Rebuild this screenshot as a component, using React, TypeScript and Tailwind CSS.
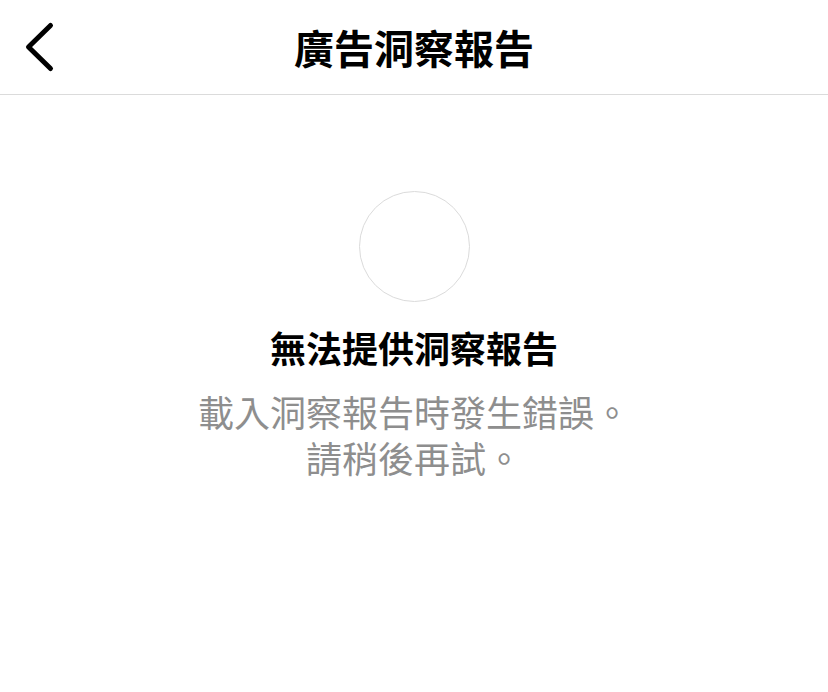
const BackIcon = () => (
    <svg width="36" height="52" viewBox="0 0 36 52" fill="none">
        <polyline
            points="30.5,4.5 8.5,26 30.5,47.5"
            stroke="#000"
            strokeWidth="5"
            strokeLinecap="round"
            strokeLinejoin="round"
        />
    </svg>
);

const App = () => {
    return (
        <div className="w-[828px] h-[692px] bg-white font-['Noto_Sans_CJK_TC',sans-serif] text-black">
            <header className="grid grid-cols-[1fr_auto_1fr] items-center h-[95px] border-b border-[#dbdbdb]">
                <div className="flex items-center pl-[20px]">
                    <BackIcon />
                </div>
                <h1 className="text-[40px] font-bold leading-[48px]">廣告洞察報告</h1>
                <div />
            </header>
            <main className="flex flex-col items-center pt-[96px]">
                <div className="w-[111px] h-[111px] rounded-full border border-[#dbdbdb]" />
                <h2 className="mt-[23px] text-[36px] font-bold leading-[44px]">
                    無法提供洞察報告
                </h2>
                <p className="mt-[19px] text-center text-[36px] leading-[46px] text-[#8e8e8e]">
                    載入洞察報告時發生錯誤。
                    <br />
                    請稍後再試。
                </p>
            </main>
        </div>
    );
};

export default App;
